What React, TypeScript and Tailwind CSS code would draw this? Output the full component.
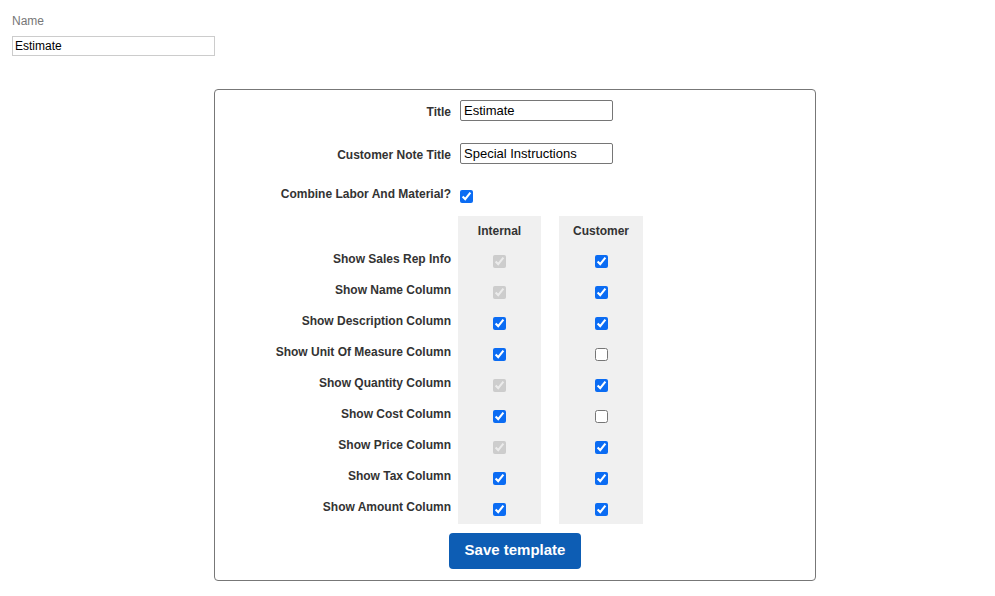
import React, { useState } from 'react';

type Row = {
  label: string;
  internal: boolean;
  internalLocked: boolean;
  customer: boolean;
};

const initialRows: Row[] = [
  { label: 'Show Sales Rep Info', internal: true, internalLocked: true, customer: true },
  { label: 'Show Name Column', internal: true, internalLocked: true, customer: true },
  { label: 'Show Description Column', internal: true, internalLocked: false, customer: true },
  { label: 'Show Unit Of Measure Column', internal: true, internalLocked: false, customer: false },
  { label: 'Show Quantity Column', internal: true, internalLocked: true, customer: true },
  { label: 'Show Cost Column', internal: true, internalLocked: false, customer: false },
  { label: 'Show Price Column', internal: true, internalLocked: true, customer: true },
  { label: 'Show Tax Column', internal: true, internalLocked: false, customer: true },
  { label: 'Show Amount Column', internal: true, internalLocked: false, customer: true },
];

const Check: React.FC<{ checked: boolean; disabled?: boolean; onChange?: () => void }> = ({
  checked,
  disabled,
  onChange,
}) => (
  <input
    type="checkbox"
    checked={checked}
    disabled={disabled}
    onChange={onChange}
    className="m-0 w-[13px] h-[13px] accent-[#0b6cf3]"
  />
);

export default function App() {
  const [name, setName] = useState('Estimate');
  const [title, setTitle] = useState('Estimate');
  const [noteTitle, setNoteTitle] = useState('Special Instructions');
  const [combine, setCombine] = useState(true);
  const [rows, setRows] = useState(initialRows);

  const toggle = (i: number, key: 'internal' | 'customer') =>
    setRows((r) => r.map((row, idx) => (idx === i ? { ...row, [key]: !row[key] } : row)));

  const labelCls = 'pr-[7px] text-right text-[12px] font-bold text-[#333]';

  return (
    <div className="min-h-[596px] bg-white font-['Liberation_Sans',Arial,sans-serif] text-[#333]">
      {/* Name */}
      <div className="pl-[12px] pt-[14px]">
        <div className="text-[12px] text-[#777] leading-[14px]">Name</div>
        <input
          value={name}
          onChange={(e) => setName(e.target.value)}
          className="mt-[8px] w-[203px] h-[20px] border border-[#ccc] px-[2px] text-[12px] text-black outline-none"
        />
      </div>

      {/* Template box */}
      <div className="ml-[214px] mt-[32px] w-[602px] border border-[#777] rounded-[4px] pb-[11px]">
        <div className="grid grid-cols-[196px_83px_18px_84px] pl-[47px]">
          {/* Title */}
          <div className={`${labelCls} h-[41px] flex items-center justify-end pt-[2px]`}>Title</div>
          <div className="col-span-3 h-[41px] flex items-center pl-[2px]">
            <input
              value={title}
              onChange={(e) => setTitle(e.target.value)}
              className="w-[153px] h-[21px] border border-[#767676] rounded-[2px] px-[3px] text-[13px] text-black outline-none"
            />
          </div>

          {/* Customer note title */}
          <div className={`${labelCls} h-[45px] flex items-center justify-end pt-[2px]`}>Customer Note Title</div>
          <div className="col-span-3 h-[45px] flex items-center pl-[2px]">
            <input
              value={noteTitle}
              onChange={(e) => setNoteTitle(e.target.value)}
              className="w-[153px] h-[21px] border border-[#767676] rounded-[2px] px-[3px] text-[13px] text-black outline-none"
            />
          </div>

          {/* Combine */}
          <div className={`${labelCls} h-[40px] flex items-center justify-end pb-1`}>Combine Labor And Material?</div>
          <div className="col-span-3 h-[40px] flex items-center pl-[2px]">
            <Check checked={combine} onChange={() => setCombine(!combine)} />
          </div>

          {/* Header */}
          <div className="h-[29px]" />
          <div className="h-[29px] bg-[#f0f0f0] flex items-center justify-center text-[12px] font-bold">Internal</div>
          <div />
          <div className="h-[29px] bg-[#f0f0f0] flex items-center justify-center text-[12px] font-bold">Customer</div>

          {rows.map((row, i) => (
            <React.Fragment key={row.label}>
              <div className={`${labelCls} h-[31px] flex items-center justify-end pb-[3px]`}>{row.label}</div>
              <div className="h-[31px] bg-[#f0f0f0] flex items-center justify-center pt-[1px]">
                <Check
                  checked={row.internal}
                  disabled={row.internalLocked}
                  onChange={() => toggle(i, 'internal')}
                />
              </div>
              <div />
              <div className="h-[31px] bg-[#f0f0f0] flex items-center justify-center pt-[1px]">
                <Check checked={row.customer} onChange={() => toggle(i, 'customer')} />
              </div>
            </React.Fragment>
          ))}
        </div>

        <div className="flex justify-center mt-[9px]">
          <button className="w-[132px] h-[36px] bg-[#0d5db4] hover:bg-[#0b4f9a] rounded-[4px] text-white text-[15px] font-bold pb-[2px]">
            Save template
          </button>
        </div>
      </div>
    </div>
  );
}
